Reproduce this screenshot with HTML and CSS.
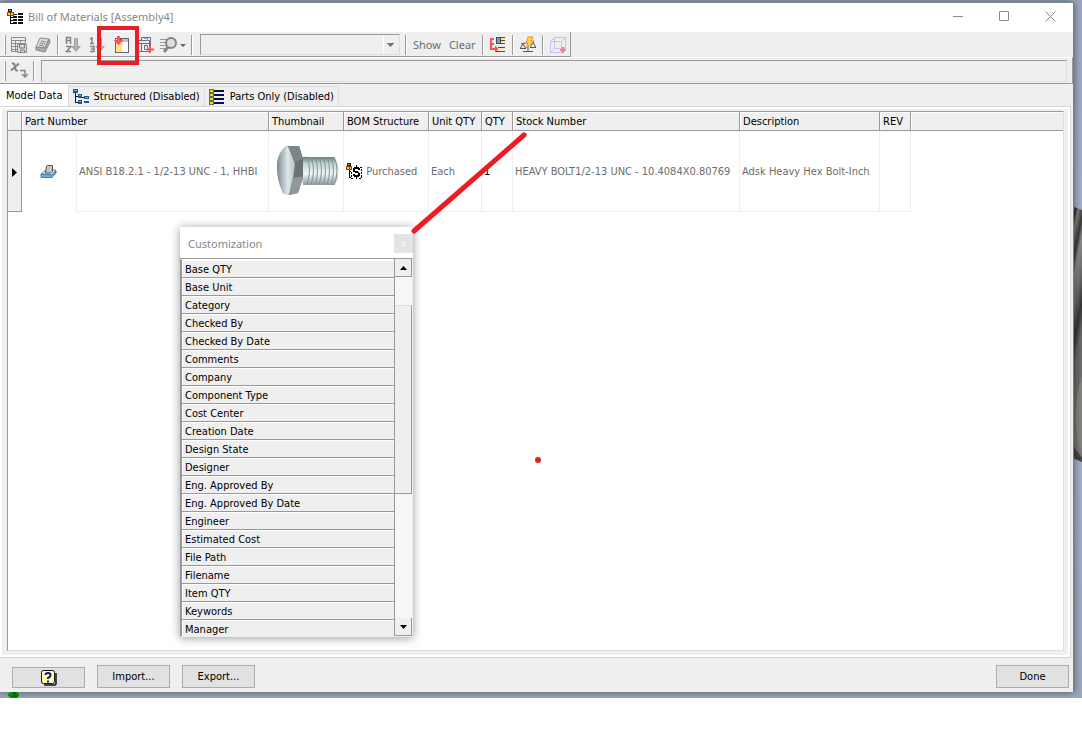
FILE: index.html
```
<!DOCTYPE html>
<html lang="en">
<head>
    <meta charset="UTF-8">
    <meta name="viewport" content="width=device-width, initial-scale=1.0">
    <title>Bill of Materials [Assembly4]</title>
    <link rel="stylesheet" href="styles.css">
</head>
<body>
    <div class="desktop">
        <svg class="model" width="10" height="256" viewBox="0 0 10 256" aria-hidden="true">
            <defs>
                <linearGradient id="steel" x1="0" y1="0" x2=".2" y2="1">
                    <stop offset="0" stop-color="#333"/>
                    <stop offset=".04" stop-color="#777"/>
                    <stop offset=".08" stop-color="#2c2c2c"/>
                    <stop offset=".13" stop-color="#858585"/>
                    <stop offset=".23" stop-color="#383838"/>
                    <stop offset=".3" stop-color="#8c8c8c"/>
                    <stop offset=".42" stop-color="#707070"/>
                    <stop offset=".55" stop-color="#353535"/>
                    <stop offset=".65" stop-color="#666"/>
                    <stop offset="1" stop-color="#777"/>
                </linearGradient>
            </defs>
            <path d="M0 0 L10 4 V255 L0 250Z" fill="url(#steel)"/>
            <path d="M10 170 Q-3 210 10 250Z" fill="#85837f"/>
            <path d="M0 238 L10 252 V256 L0 252Z" fill="#444"/>
        </svg>

        <main class="window">
            <header class="titlebar">
                <svg width="17" height="16" viewBox="0 0 17 16" shape-rendering="crispEdges" aria-hidden="true">
                    <path d="M3 6h1v9H3zM3 8h3v1H3zM3 11h3v1H3zM3 14h3v1H3z" fill="#000"/>
                    <path d="M7 5h3v1H7zM6 7h4v2H6zM6 10h4v2H6zM6 13h4v2H6zM11 4h5v2h-5zM11 7h5v2h-5zM11 10h5v2h-5zM11 13h5v2h-5z" fill="#111"/>
                    <path d="M1 0h4v3H1z" fill="#222"/><path d="M2 1h2v1H2z" fill="#6f9cc8"/>
                    <path d="M0 3h7v4H0z" fill="#964008"/><path d="M1 4h2v2H1zM4 4h2v2H4z" fill="#ffc648"/>
                </svg>
                <h1>Bill of Materials [Assembly4]</h1>
                <div class="window-buttons">
                    <button type="button" aria-label="Minimize"><svg width="11" height="11"><path d="M0 5.500h10" stroke="#888"/></svg></button>
                    <button type="button" aria-label="Maximize"><svg width="11" height="11"><path d="M.5.5h9v9h-9z" fill="none" stroke="#888"/></svg></button>
                    <button type="button" aria-label="Close"><svg width="11" height="11"><path d="M.5.5l10 10M10.500.5l-10 10" stroke="#888"/></svg></button>
                </div>
            </header>

            <div class="toolbar">
                <span class="grip"></span>
                <button type="button" class="tool" aria-label="Save table">
                    <svg width="18" height="18" viewBox="0 0 18 18" fill="none" stroke="#8b8b8b"><path d="M1.500 1.500h14v14h-14zM1 4.500h15M1 7.500h15M1 10.500h7M1 13.500h7M5.500 4v12M10.500 4v4"/><path d="M7.500 8.500h9v8h-9z" fill="#ddd"/><path d="M9.500 9v3h5V9M10.500 16v-2h4v2" stroke="#777"/></svg>
                </button>
                <button type="button" class="tool" aria-label="Notes">
                    <svg width="18" height="18" viewBox="0 0 18 18"><path d="M6 2l9 1-4 9-9-1z" fill="#ddd" stroke="#8b8b8b"/><path d="M2 11v3l9 2 5-10-1-3-4 9z" fill="#aaa" stroke="#888"/><path d="M7 5l5 1M6 7l5 1M5 9l5 1" stroke="#888"/></svg>
                </button>
                <span class="separator"></span>
                <button type="button" class="tool" aria-label="Sort">
                    <svg width="18" height="18" viewBox="0 0 18 18" fill="none" stroke="#858585"><path d="M2.500 8V1.500h4V8M2 4.500h5M2 10.500h5l-4.500 5H7" stroke-width="1.500"/><path d="M10 2h4v8h3l-5 6-5-6h3z" fill="#a2a2a2" stroke="none"/><path d="M12 2v12" stroke="#c9c9c9"/></svg>
                </button>
                <button type="button" class="tool" aria-label="Renumber items">
                    <svg width="18" height="18" viewBox="0 0 18 18" fill="none" stroke="#858585"><path d="M2 3l2-1v5M2 7.500h4M2 10.500h4v5H2M3 13h3" stroke-width="1.500"/><path d="M10 2h4v8h3l-5 6-5-6h3z" fill="#a2a2a2" stroke="none"/><path d="M12 2v12" stroke="#c9c9c9"/></svg>
                </button>
                <button type="button" class="tool" aria-label="Choose columns">
                    <svg width="18" height="18" viewBox="0 0 18 18" shape-rendering="crispEdges"><path d="M3 2h14v15H3z" fill="#666"/><path d="M4 5h6v11H4z" fill="#fce582"/><path d="M10 3h6v3h-6z" fill="#a4c6ef"/><path d="M10 6h6v10h-6z" fill="#fff"/><path d="M4 3h1v2H4z" fill="#fff"/><path d="M5 0h3v4h3v1h-1v1H9v1H8v1H7v1H6V8H5V7H4V6H3V5H2V4h3z" fill="#fb5359"/></svg>
                </button>
                <button type="button" class="tool" aria-label="Add custom iProperty columns">
                    <svg width="18" height="18" viewBox="0 0 18 18" fill="none" stroke="#687079"><path d="M5.500 4V1.500h9V11M2.500 4.500h11v11h-11zM2 7.500h11M5.500 8v7M8.500 9.500h3v4h-3z"/><path d="M8 2.500h4M11.500 2v3" stroke="#89aacb"/><path d="M14 10v7M11 13.500h7" stroke="#f45161" stroke-width="2"/></svg>
                </button>
                <button type="button" class="tool tool-wide" aria-label="Find">
                    <svg width="28" height="18" viewBox="0 0 28 18"><path d="M1 3.500h7M1 6.500h6M1 9.500h6M1 12.500h5" stroke="#999"/><circle cx="12" cy="7" r="5" fill="#ddd" stroke="#858585" stroke-width="2"/><path d="M9 11l-4 5" stroke="#858585" stroke-width="3"/><path d="M21 8h6l-3 3z" fill="#666"/></svg>
                </button>
                <span class="separator"></span>
                <select class="filter" aria-label="Filter"><option></option></select>
                <span class="separator"></span>
                <button type="button" class="text-tool">Show</button>
                <button type="button" class="text-tool">Clear</button>
                <span class="separator"></span>
                <button type="button" class="tool" aria-label="Part number merge">
                    <svg width="18" height="18" viewBox="0 0 18 18" shape-rendering="crispEdges"><path d="M7 1h9v1H7zM7 4h9v1H7zM7 7h9v1H7zM7 1h1v7H7zM11 1h1v7h-1zM9 11h7v1H9zM7 15h9v1H7z" fill="#4b4b4b"/><path d="M8 2h3v5H8z" fill="#759bbb"/><path d="M12 2h4v2h-4zM12 5h4v2h-4zM10 12h6v2h-6z" fill="#ffea9c"/><path d="M1 2h4v2H3v3h2v2H3v3h3v-2h1v1h1v1h1v2H8v1H7v1H6v-2H1z" fill="#fb5359"/></svg>
                </button>
                <span class="separator"></span>
                <button type="button" class="tool" aria-label="Update mass properties">
                    <svg width="18" height="18" viewBox="0 0 18 18" fill="none" stroke="#515862"><path d="M9 5v10M4 15.500h10M2 8l13-3M4 8l-2.500 4M4 8l2.500 4M14 6l-2.500 5M14 6l2.500 5M1 12.500h6M11 11.500h6"/><path d="M9 1h5l-2 4h3L7 12l2-5H7z" fill="#ffdc3a" stroke="#f28a4b"/></svg>
                </button>
                <span class="separator"></span>
                <button type="button" class="tool" aria-label="Add virtual part">
                    <svg width="18" height="18" viewBox="0 0 18 18" fill="none" stroke="#d1bdf1"><path d="M1.500 5.500h11v11h-11zM5.500 1.500h11v11h-11zM1.500 5.500l4-4M12.500 5.500l4-4M1.500 16.500l4-4M12.500 16.500l4-4"/><path d="M14 11v6M11 14h6" stroke="#fb7d85" stroke-width="2"/></svg>
                </button>
            </div>

            <div class="formula-bar">
                <span class="grip"></span>
                <button type="button" class="tool" aria-label="Property expression">
                    <svg width="20" height="18" viewBox="0 0 20 18" fill="none" stroke="#858585"><path d="M3 1.500c5-1 1 8 6 7M10 1.500L2 8.500" stroke-width="2"/><path d="M11 8.500h5v6M13 12l3 3 3-3" stroke-width="1.500"/></svg>
                </button>
                <span class="separator"></span>
                <input type="text" class="formula" aria-label="Expression">
            </div>

            <nav class="tabs" role="tablist">
                <button type="button" class="tab tab-active" role="tab" aria-selected="true">Model Data</button>
                <button type="button" class="tab" role="tab" aria-selected="false">
                    <svg width="16" height="16" viewBox="0 0 16 16" shape-rendering="crispEdges"><path d="M2 4h1v10H2zM2 7h4v1H2zM2 13h4v1H2zM9 8h3v1H9z" fill="#111"/><path d="M0 0h5v4H0zM5 5h4v4H5zM5 11h4v4H5zM11 7h5v3h-5zM11 12h5v2h-5z" fill="#245587"/><path d="M1 1h3v1H1zM6 6h2v1H6zM6 12h2v1H6zM12 8h3v1h-3z" fill="#80b7e2"/></svg>
                    Structured (Disabled)
                </button>
                <button type="button" class="tab" role="tab" aria-selected="false">
                    <svg width="16" height="16" viewBox="0 0 16 16" shape-rendering="crispEdges"><path d="M0 0h5v16H0z" fill="#666"/><path d="M1 1h3v2H1zM1 5h3v2H1zM1 9h3v2H1zM1 13h3v2H1z" fill="#e6df12"/><path d="M5 2h10M5 6h10M5 10h10M5 14h10" stroke="#090980" stroke-width="2"/><path d="M5 1.500h10M5 9.500h10" stroke="#111"/></svg>
                    Parts Only (Disabled)
                </button>
            </nav>

            <section class="tab-page">
                <div class="grid">
                    <table>
                        <colgroup>
                            <col class="col-marker"><col class="col-icon"><col class="col-part"><col class="col-thumb"><col class="col-bom"><col class="col-unit"><col class="col-qty"><col class="col-stock"><col class="col-desc"><col class="col-rev"><col>
                        </colgroup>
                        <thead>
                            <tr>
                                <th></th>
                                <th colspan="2">Part Number</th>
                                <th>Thumbnail</th>
                                <th>BOM Structure</th>
                                <th>Unit QTY</th>
                                <th>QTY</th>
                                <th>Stock Number</th>
                                <th>Description</th>
                                <th>REV</th>
                                <th></th>
                            </tr>
                        </thead>
                        <tbody>
                            <tr>
                                <td class="marker"><svg width="5" height="9"><path d="M0 0l5 4.500-5 4.500z"/></svg></td>
                                <td class="part-icon">
                                    <svg width="18" height="16" viewBox="0 0 18 16"><path d="M1 10l5-4h10l-4 5z" fill="#d7edf9" stroke="#4f8bb4"/><path d="M1 10l11 1 4-4v2l-4 4.500H1z" fill="#75b1d9" stroke="#427ba2"/><path d="M5.500 9l1-7 1-.5h5v6l-2 1.500z" fill="#c6c6c6" stroke="#555"/></svg>
                                </td>
                                <td>ANSI B18.2.1 - 1/2-13 UNC - 1, HHBI</td>
                                <td class="thumb">
                                    <svg width="64" height="52" viewBox="0 0 64 52" role="img" aria-label="Hex bolt">
                                        <defs>
                                            <linearGradient id="head" x1="0" y1="0" x2="1" y2="0"><stop offset="0" stop-color="#7c898c"/><stop offset=".6" stop-color="#dce8e9"/><stop offset="1" stop-color="#b5c2c5"/></linearGradient>
                                            <linearGradient id="shaft" x1="0" y1="0" x2="0" y2="1"><stop offset="0" stop-color="#65787b"/><stop offset=".25" stop-color="#c4d2d3"/><stop offset=".6" stop-color="#f2f7f7"/><stop offset="1" stop-color="#8b999c"/></linearGradient>
                                        </defs>
                                        <path d="M25 13q3-2 8-1h25q5 8 5 15t-5 13H27z" fill="url(#shaft)"/>
                                        <path d="M31 12q5 13 0 27M35 12q5 13 0 28M39 12q5 13 0 28M43 12q5 13 0 28M47 12q5 13 0 28M51 12q5 13 0 28M55 12q5 13 0 28M58 12q6 13 0 28" fill="none" stroke="#809195"/>
                                        <path d="M8 3Q12 0 14 1h9l4 13v19l-5 15-9 2-6-2-5-14q-2-20 6-31z" fill="#6c7375"/>
                                        <path d="M8 3l4-2 7 18-2 14-4 17-6-2Q0 34 1 17 3 7 8 3z" fill="url(#head)"/>
                                        <path d="M12 1h11l4 13-8 3z" fill="#7c8587"/>
                                        <path d="M13 49l4-16 10-2-5 17z" fill="#8f989a"/>
                                    </svg>
                                </td>
                                <td class="bom">
                                    <svg width="17" height="17" viewBox="0 0 17 17" shape-rendering="crispEdges" aria-hidden="true"><path d="M3 7h1v8H3zM4 8h1v1H4zM4 14h1v1H4z"/><path d="M14 4h2v1h-2zM15 6h1v2h-1zM15 9h1v2h-1zM15 12h1v3h-1zM13 15h2v1h-2zM5 15h2v1H5zM5 9h1v2H5zM5 12h1v2H5z"/><path d="M10 2h1v2h2v1h1v2h-2V6H9v2h3v1h1v1h1v3h-1v1h-2v2h-1v-2H8v-1H7v-2h2v1h3v-2H9v-1H8V9H7V5h1V4h2z"/><path d="M1 0h4v3H1z" fill="#222"/><path d="M2 1h2v1H2z" fill="#6f9cc8"/><path d="M0 3h6v4H0z" fill="#964008"/><path d="M1 4h2v2H1zM4 4h1v2H4z" fill="#ffc648"/></svg>
                                    Purchased
                                </td>
                                <td>Each</td>
                                <td class="value">1</td>
                                <td>HEAVY BOLT1/2-13 UNC - 10.4084X0.80769</td>
                                <td>Adsk Heavy Hex Bolt-Inch</td>
                                <td></td>
                                <td class="empty"></td>
                            </tr>
                        </tbody>
                    </table>
                </div>
            </section>

            <footer class="actions">
                <button type="button" class="push push-help" aria-label="Help">
                    <svg class="help-icon" width="16" height="16" viewBox="0 0 16 16"><path d="M3 15h11l1-1V3" fill="none" stroke="#111" stroke-width="1.500"/><rect x=".5" y=".5" width="13" height="13" rx="2" fill="#ffffb5" stroke="#111"/><path d="M4.500 5q0-2 2.500-2t2.500 2-2.500 3v1M7 10.500v2" fill="none" stroke="#161675" stroke-width="2"/></svg>
                </button>
                <button type="button" class="push">Import...</button>
                <button type="button" class="push">Export...</button>
                <button type="button" class="push push-done">Done</button>
            </footer>
        </main>

        <section class="palette" aria-label="Customization">
            <header class="palette-title">
                <h2>Customization</h2>
                <button type="button" aria-label="Close">x</button>
            </header>
            <div class="palette-body">
                <ul class="fields">
                    <li>Base QTY</li>
                    <li>Base Unit</li>
                    <li>Category</li>
                    <li>Checked By</li>
                    <li>Checked By Date</li>
                    <li>Comments</li>
                    <li>Company</li>
                    <li>Component Type</li>
                    <li>Cost Center</li>
                    <li>Creation Date</li>
                    <li>Design State</li>
                    <li>Designer</li>
                    <li>Eng. Approved By</li>
                    <li>Eng. Approved By Date</li>
                    <li>Engineer</li>
                    <li>Estimated Cost</li>
                    <li>File Path</li>
                    <li>Filename</li>
                    <li>Item QTY</li>
                    <li>Keywords</li>
                    <li>Manager</li>
                </ul>
                <div class="scrollbar">
                    <button type="button" aria-label="Scroll up"><svg width="7" height="4"><path d="M0 4h7L3.500 0z"/></svg></button>
                    <div class="track"><div class="thumb-bar"></div></div>
                    <button type="button" aria-label="Scroll down"><svg width="7" height="4"><path d="M0 0h7L3.500 4z"/></svg></button>
                </div>
            </div>
        </section>

        <svg class="markup" width="560" height="480" viewBox="0 0 560 480" aria-hidden="true">
            <rect x="99" y="28" width="38" height="35" fill="none" stroke="#ed1c24" stroke-width="4"/>
            <path d="M524 135L414 231" stroke="#ed1c24" stroke-width="5" stroke-linecap="round"/>
            <circle cx="538" cy="460" r="3" fill="#ed1c24"/>
        </svg>
        <svg class="origin" width="12" height="6" viewBox="0 0 12 6" aria-hidden="true"><path d="M0 2l3-2h6l2 2v2L9 6H3L0 4z" fill="#07860b"/><path d="M5 0h3v5H5z" fill="#056407"/></svg>
    </div>
</body>
</html>
```

FILE: styles.css
```
* {
    box-sizing: border-box;
}

body {
    margin: 0;
    background-color: #ffffff;
    color: #000000;
    font-family: "DejaVu Sans Condensed", "DejaVu Sans", sans-serif;
    font-size: 11px;
    line-height: 14px;
}

button,
input,
select {
    font: inherit;
    color: inherit;
}

button {
    padding: 0;
    border: none;
    background: none;
}

svg {
    display: block;
    flex: none;
}

.desktop {
    position: relative;
    display: flex;
    min-height: calc(100vh - 39px);
    padding: 2px 8px 6px 0;
    background: linear-gradient(#9ba9c0, #a6b4ca 50%, #9ba9bd);
    overflow: hidden;
}

.model {
    position: absolute;
    top: 206px;
    right: 0;
}

.window {
    position: relative;
    flex: 1;
    min-width: 0;
    display: flex;
    flex-direction: column;
    background-color: #efefef;
    border-top: 1px solid #7c8798;
    border-right: 1px solid #737d8c;
    box-shadow: 0 0 8px rgba(0, 0, 0, 0.5);
}

/* Title bar */
.titlebar {
    display: flex;
    align-items: center;
    gap: 4px;
    height: 29px;
    padding: 0 0 2px 7px;
    background-color: #ffffff;
}

h1,
h2 {
    margin: 0;
    font-family: "Noto Sans", "Open Sans", sans-serif;
    font-size: 11px;
    font-weight: 400;
    color: #888888;
}

.window-buttons {
    display: flex;
    margin-left: auto;
}

.window-buttons button {
    display: flex;
    align-items: center;
    justify-content: center;
    width: 46px;
    height: 27px;
}

/* Toolbars */
.toolbar {
    display: flex;
    align-items: center;
    align-self: flex-start;
    height: 25px;
    padding: 1px 0 0 4px;
    border-right: 1px solid #999999;
    border-bottom: 1px solid #999999;
}

.grip {
    width: 2px;
    height: 20px;
    margin-right: 1px;
    border-right: 1px solid #999999;
    background-color: #ffffff;
}

.separator {
    width: 2px;
    height: 20px;
    margin: 0 2px;
    border-left: 1px solid #999999;
    background-color: #ffffff;
}

.tool {
    display: flex;
    align-items: center;
    justify-content: center;
    width: 24px;
    height: 22px;
}

.tool-wide {
    width: 32px;
}

.filter {
    appearance: none;
    width: 200px;
    height: 21px;
    margin: 0 3px 0 5px;
    border: 1px solid #999999;
    border-right-color: #dddddd;
    border-bottom-color: #dddddd;
    border-radius: 0;
    background:
        linear-gradient(to bottom left, #777777 50%, transparent 50%) no-repeat right 8px center / 4px 4px,
        linear-gradient(to bottom right, #777777 50%, transparent 50%) no-repeat right 4px center / 4px 4px,
        linear-gradient(#ffffff, #ffffff) no-repeat right 15px center / 1px 100%,
        #efefef;
}

.text-tool {
    height: 22px;
    padding: 0 4px;
    font-family: "Noto Sans", "Open Sans", sans-serif;
    color: #6d6d6d;
}

.formula-bar {
    display: flex;
    align-items: center;
    height: 27px;
    padding: 0 5px 0 4px;
    border-top: 1px solid #ffffff;
    border-right: 1px solid #999999;
    border-bottom: 1px solid #999999;
}

.formula {
    flex: 1;
    min-width: 0;
    height: 22px;
    margin-left: 4px;
    border: 1px solid #999999;
    border-right-color: #dddddd;
    border-bottom-color: #dddddd;
    background-color: #efefef;
}

/* Tabs */
.tabs {
    display: flex;
    align-items: flex-end;
    height: 22px;
}

.tab {
    display: flex;
    align-items: center;
    gap: 5px;
    height: 20px;
    padding: 0 4px;
    border: 1px solid #dddddd;
    border-left: none;
    border-bottom: none;
}

.tab-active {
    height: 22px;
    padding: 0 5px 0 6px;
    background-color: #ffffff;
    border-color: #ffffff #dddddd;
}

.tab-page {
    flex: 1;
    display: flex;
    margin-right: 2px;
    padding: 3px 3px 4px 3px;
    border: 1px solid #d5d5d5;
    border-left: none;
    box-shadow: inset 0 0 0 2px #ffffff;
}

/* Parts grid */
.grid {
    flex: 1;
    min-width: 0;
    margin: 1px 3px 2px 4px;
    border: 1px solid #999999;
    border-right-color: #dddddd;
    border-bottom-color: #dddddd;
    background-color: #ffffff;
}

table {
    width: 100%;
    table-layout: fixed;
    border-collapse: separate;
    border-spacing: 0;
}

.col-marker { width: 14px; }
.col-icon { width: 55px; }
.col-part { width: 192px; }
.col-thumb { width: 75px; }
.col-bom { width: 85px; }
.col-unit { width: 53px; }
.col-qty { width: 31px; }
.col-stock { width: 227px; }
.col-desc { width: 140px; }
.col-rev { width: 31px; }

th {
    height: 19px;
    padding: 2px 3px 0;
    border-right: 1px solid #999999;
    border-bottom: 1px solid #999999;
    background-color: #efefef;
    box-shadow: inset 1px 1px #ffffff;
    font-weight: 400;
    text-align: left;
    white-space: nowrap;
}

th:last-child {
    border-right: none;
}

td {
    height: 81px;
    padding: 2px 2px 0;
    border-right: 1px solid #efefef;
    border-bottom: 1px solid #efefef;
    color: #6d6d6d;
    white-space: nowrap;
}

td svg {
    margin: 0 auto;
}

.marker {
    border-right-color: #999999;
    border-bottom-color: #999999;
    background-color: #efefef;
}

.part-icon {
    padding-top: 0;
    border-bottom: none;
}

.thumb {
    padding: 0 0 0 4px;
}

.bom {
    padding-top: 0;
}

.bom svg {
    display: inline-block;
    vertical-align: middle;
}

.value {
    color: #000000;
}

.empty {
    border: none;
}

/* Bottom buttons */
.actions {
    display: flex;
    align-items: flex-end;
    gap: 12px;
    height: 34px;
    padding: 0 4px 4px 12px;
}

.push {
    width: 73px;
    height: 23px;
    border: 1px solid #adadad;
    background-color: #e1e1e1;
}

.push-help {
    height: 21px;
}

.help-icon {
    margin: 0 auto;
}

.push-done {
    margin-left: auto;
}

/* Floating field chooser */
.palette {
    position: absolute;
    top: 227px;
    left: 180px;
    width: 233px;
    background-color: #ffffff;
    box-shadow: 0 1px 9px rgba(0, 0, 0, 0.4);
}

.palette-title {
    display: flex;
    align-items: center;
    justify-content: space-between;
    height: 31px;
    padding: 2px 0 0 8px;
}

.palette-title button {
    width: 19px;
    height: 19px;
    background-color: #e3e3e3;
    color: #f5f5f5;
}

.palette-body {
    display: flex;
    height: 379px;
    border: 1px solid #999999;
    border-right-color: #eeeeee;
    border-bottom-color: #eeeeee;
    overflow: hidden;
}

.fields {
    flex: 1;
    margin: 0;
    padding: 1px 0 0;
    list-style: none;
}

.fields li {
    height: 18px;
    padding: 3px 3px 0;
    border-left: 1px solid #999999;
    border-bottom: 1px solid #999999;
    background-color: #efefef;
    box-shadow: inset 1px 1px #ffffff;
}

.scrollbar {
    display: flex;
    flex-direction: column;
    width: 18px;
    border-left: 1px solid #999999;
}

.scrollbar button {
    display: flex;
    align-items: center;
    justify-content: center;
    height: 18px;
    border-right: 1px solid #999999;
    border-bottom: 1px solid #999999;
    background-color: #efefef;
}

.track {
    flex: 1;
    padding-top: 28px;
    background-color: #f7f7f7;
}

.thumb-bar {
    height: 189px;
    border: 1px solid #999999;
    border-top-color: #dddddd;
    border-left: none;
    background-color: #efefef;
}

.markup {
    position: absolute;
    top: 0;
    left: 0;
    pointer-events: none;
}

.origin {
    position: absolute;
    bottom: 0;
    left: 8px;
}
```
